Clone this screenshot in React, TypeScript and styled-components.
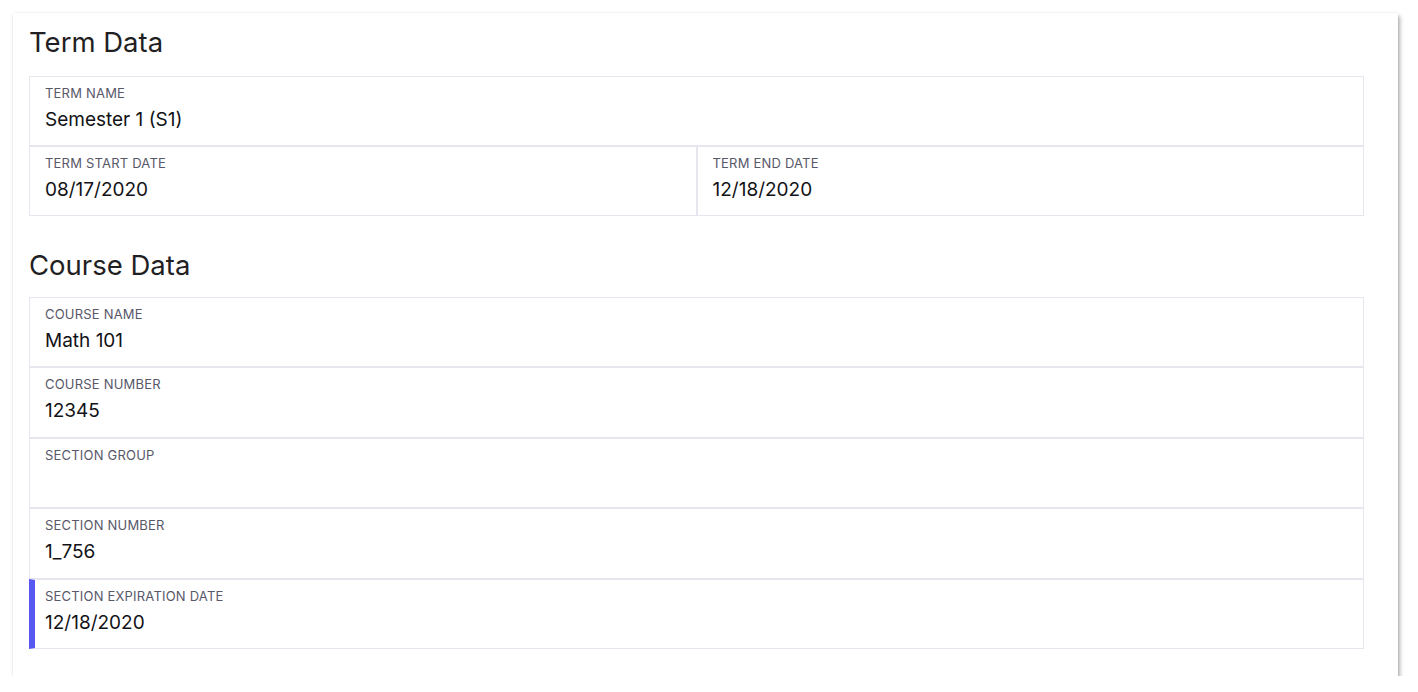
import React from "react";
import styled, { createGlobalStyle } from "styled-components";

const GlobalStyle = createGlobalStyle`
  html, body {
    margin: 0;
    padding: 0;
    background: #ffffff;
  }
  body {
    font-family: Inter, "Noto Sans", "Liberation Sans", sans-serif;
    -webkit-font-smoothing: antialiased;
  }
`;

const Card = styled.div`
  box-sizing: border-box;
  width: 1385px;
  height: 663px;
  margin: 13px 0 0 13px;
  padding: 13px 34px 0 16px;
  background: #fff;
  box-shadow: 2px 3px 4px rgba(0, 0, 0, 0.3), 0 0 2px rgba(0, 0, 0, 0.1);
`;

const SectionTitle = styled.h2<{ first?: boolean }>`
  margin: ${(p) => (p.first ? "0 0 18px" : "33px 0 16px")};
  font-size: 27.5px;
  line-height: 32px;
  font-weight: 400;
  color: #1f1f24;
`;

const Grid = styled.div<{ cols?: number }>`
  display: grid;
  grid-template-columns: repeat(${(p) => p.cols ?? 1}, 1fr);
`;

const Field = styled.div<{ active?: boolean; h?: number }>`
  box-sizing: border-box;
  height: ${(p) => p.h ?? 70}px;
  padding: 8px 15px 0 ${(p) => (p.active ? 10 : 15)}px;
  border: 1px solid #e6e6ee;
  border-left: ${(p) => (p.active ? "6px solid #5757f2" : "1px solid #e6e6ee")};
  display: flex;
  flex-direction: column;
  gap: 7px;
`;

const Label = styled.div`
  font-size: 13px;
  line-height: 16px;
  letter-spacing: 0.2px;
  color: #585869;
  text-transform: uppercase;
`;

const Value = styled.div`
  font-size: 19px;
  line-height: 24px;
  color: #121216;
  min-height: 24px;
`;

type Item = { label: string; value: string; active?: boolean };

const courseItems: Item[] = [
  { label: "Course Name", value: "Math 101" },
  { label: "Course Number", value: "12345" },
  { label: "Section Group", value: "" },
  { label: "Section Number", value: "1_756" },
  { label: "Section Expiration Date", value: "12/18/2020", active: true },
];

const FieldBox = ({ item, h }: { item: Item; h?: number }) => (
  <Field active={item.active} h={h}>
    <Label>{item.label}</Label>
    <Value>{item.value}</Value>
  </Field>
);

export default function App() {
  return (
    <>
      <GlobalStyle />
      <Card>
        <SectionTitle first>Term Data</SectionTitle>
        <Grid>
          <FieldBox item={{ label: "Term Name", value: "Semester 1 (S1)" }} />
        </Grid>
        <Grid cols={2}>
          <FieldBox item={{ label: "Term Start Date", value: "08/17/2020" }} />
          <FieldBox item={{ label: "Term End Date", value: "12/18/2020" }} />
        </Grid>

        <SectionTitle>Course Data</SectionTitle>
        <Grid>
          {courseItems.map((item) => (
            <FieldBox key={item.label} item={item} h={70.4} />
          ))}
        </Grid>
      </Card>
    </>
  );
}
